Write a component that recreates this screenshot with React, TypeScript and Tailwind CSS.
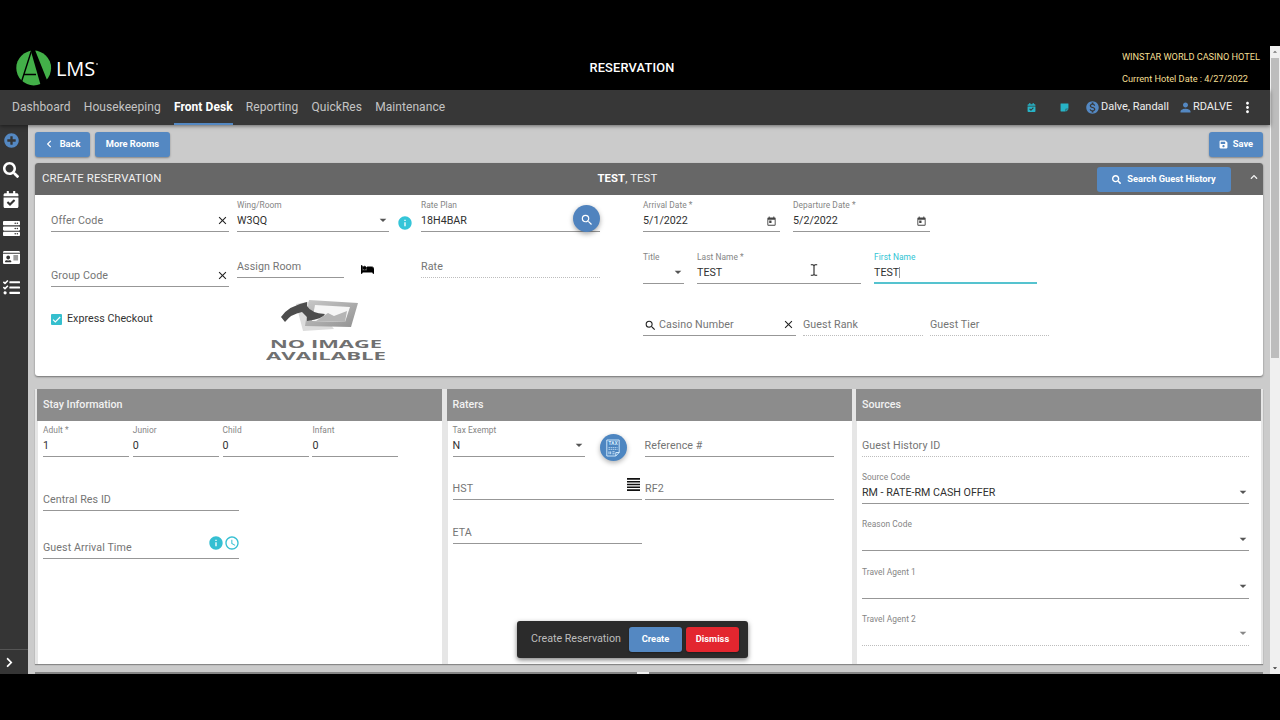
import type { ReactNode } from "react";
import {
  FaBed,
  FaCalendarCheck,
  FaChevronLeft,
  FaChevronRight,
  FaChevronUp,
  FaIdCard,
  FaPlusCircle,
  FaSave,
  FaSearch,
  FaServer,
  FaStickyNote,
  FaTasks,
} from "react-icons/fa";
import {
  MdAccessTime,
  MdArrowDropDown,
  MdClose,
  MdInfo,
  MdMonetizationOn,
  MdMoreVert,
  MdPerson,
  MdSearch,
  MdToday,
} from "react-icons/md";

type FieldProps = {
  label?: string;
  value?: string;
  placeholder?: string;
  className?: string;
  line?: "solid" | "dotted" | "active";
  prefix?: ReactNode;
  children?: ReactNode;
};

function Field({ label, value, placeholder, className = "", line = "solid", prefix, children }: FieldProps) {
  const border =
    line === "dotted"
      ? "border-b border-dotted border-[#bdbdbd]"
      : line === "active"
        ? "border-b-2 border-[#55c3cf]"
        : "border-b border-[#979797]";
  return (
    <div className={`flex h-8 shrink-0 flex-col ${border} ${className}`}>
      <div
        className={`h-[11px] shrink-0 text-[8.4px] leading-[11px] tracking-[0.05px] whitespace-nowrap ${line === "active" ? "text-[#2fc4d4]" : "text-[#858585]"}`}
      >
        {label}
      </div>
      <div className="flex h-[20px] items-center text-[10.7px] leading-[18px] whitespace-nowrap">
        {prefix}
        {value !== undefined && <span className="text-[#303030]">{value}</span>}
        {placeholder && <span className="tracking-[0.08px] text-[#757575]">{placeholder}</span>}
        {line === "active" && <span className="h-[11px] w-px bg-[#999]" />}
        <span className="-mt-[2px] ml-auto flex items-center">{children}</span>
      </div>
    </div>
  );
}

const Arrow = ({ light = false }: { light?: boolean }) => (
  <MdArrowDropDown className={`-mt-px -mr-[2px] size-4 ${light ? "text-[#888]" : "text-[#555]"}`} />
);

function Button({ className = "", children }: { className?: string; children: ReactNode }) {
  return (
    <button
      className={`flex h-[25px] items-center justify-center rounded-[3px] pb-px text-[9.3px] font-bold text-white shadow-[0_1px_2px_rgba(0,0,0,0.35)] ${className}`}
    >
      {children}
    </button>
  );
}

function Logo() {
  return (
    <svg className="size-9" viewBox="0 0 36 36">
      <circle cx="17.7" cy="18" r="17.4" fill="#43b049" />
      <path d="M14.6 0 L19 0 L32 32.5 L24.6 35 Z" fill="#000" />
      <path d="M15.2 1.5 L5.6 31.5 M8 24.5 H20" stroke="#000" strokeWidth="1.4" fill="none" />
    </svg>
  );
}

function NoImage() {
  return (
    <svg className="h-[64px] w-[122px]" viewBox="0 0 122 64">
      <defs>
        <linearGradient id="frame" x1="0" y1="0" x2="1" y2="1">
          <stop offset="0" stopColor="#c9c9c9" />
          <stop offset="1" stopColor="#929292" />
        </linearGradient>
      </defs>
      <path d="M30 5 L46 2 L68 30 L37 32 Z" fill="#dcdcdc" />
      <path d="M43 1 L92 4 L85 28 L39 27 Z" fill="url(#frame)" />
      <path d="M49 6 L84 8 L79 23 L46 22 Z" fill="#f6f6f6" />
      <path d="M50 22 L62 14 L68 17 L81 12 L79 23 Z" fill="#b5b5b5" />
      <path d="M15 18 Q22 7 41 3 L41 7 Q45 14 59 15 Q57 20 41 22 L41 18 L36 13 Q25 15 19 23 Z" fill="#4d4d4d" />
      <g fill="#707070" fontFamily="Open Sans, sans-serif" fontWeight="700" fontSize="10.5">
        <text x="4" y="48.5" textLength="112" lengthAdjust="spacingAndGlyphs">NO IMAGE</text>
        <text x="0" y="61" textLength="120" lengthAdjust="spacingAndGlyphs">AVAILABLE</text>
      </g>
    </svg>
  );
}

function TaxIcon() {
  return (
    <svg className="size-[18px]" viewBox="0 0 18 18" fill="none" stroke="#d9efff" strokeWidth="0.9">
      <path d="M2.8 1 H15.2 V13.5 L11.8 17 H2.8 Z M15.2 13.5 H11.8 V17" />
      <text x="4.4" y="6.4" fontSize="4.6" fontWeight="700" fill="#d9efff" stroke="none" textLength="9.2" fontFamily="Roboto, sans-serif">
        TAX
      </text>
      <path d="M4.5 8.6 H13.5 M4.5 10.4 H13.5" strokeDasharray="1.6 0.5" strokeWidth="0.7" />
      <path d="M5 12.4 V15.2 M6.7 12.4 V15.2 M8.4 12.8 H10.6 M8.4 14.8 H10.6" />
    </svg>
  );
}

function Bars() {
  return (
    <svg className="h-[13px] w-[13px]" viewBox="0 0 13 13" stroke="#111" strokeWidth="1.6">
      <path d="M0 0.9H13 M0 3.7H13 M0 6.5H13 M0 9.3H13 M0 12.1H13" />
    </svg>
  );
}

function Panel({ title, className = "", children }: { title: string; className?: string; children: ReactNode }) {
  return (
    <section className={`flex w-[405px] shrink-0 flex-col ${className}`}>
      <h2 className="flex h-8 items-center bg-[#8c8c8c] pt-px pl-1.5 text-[10.7px] font-medium text-[#f2f2f2]">{title}</h2>
      <div className="ml-px flex flex-1 flex-col bg-white pt-1 pl-[5px]">{children}</div>
    </section>
  );
}

const navItems = ["Dashboard", "Housekeeping", "Front Desk", "Reporting", "QuickRes", "Maintenance"];

export default function App() {
  return (
    <div className="h-[720px] w-[1280px] overflow-hidden bg-black pt-[46px] font-[Roboto,sans-serif]">
      <div className="relative flex h-[628px]">
        <div className="flex w-[1270px] flex-col">
          <header className="grid h-11 shrink-0 grid-cols-3 bg-black">
            <div className="flex items-start pt-1 pl-4">
              <Logo />
              <span className="mt-[4px] ml-1 font-['Open_Sans',sans-serif] text-[20px] leading-[30px] font-medium tracking-[-0.1px] text-white">
                LMS
              </span>
              <span className="mt-[13px] ml-px size-[2px] rounded-full bg-[#999]" />
            </div>
            <h1 className="-translate-x-[3px] pt-[14px] text-center text-[12.8px] leading-4 font-medium tracking-[0.2px] text-white">RESERVATION</h1>
            <div className="ml-auto flex w-[148px] flex-col pt-[3px] text-[9.2px] leading-[16px] whitespace-nowrap text-[#f3df93]">
              <span className="tracking-[-0.03px]">WINSTAR WORLD CASINO HOTEL</span>
              <span className="mt-[6px]">Current Hotel Date : 4/27/2022</span>
            </div>
          </header>

          <nav className="z-10 flex h-[35px] shrink-0 items-stretch gap-[13.2px] bg-[#373737] pl-3 text-[12px] tracking-[0.06px] text-[#c4c4c4] shadow-[0_1px_4px_rgba(0,0,0,0.5)]">
            {navItems.map((item) => (
              <a
                key={item}
                className={`border-b-2 pt-[8px] leading-[18px] ${item === "Front Desk" ? "border-[#5488c2] font-bold text-white" : "border-transparent"}`}
              >
                {item}
              </a>
            ))}
            <div className="ml-auto flex items-center pr-[14px] text-[11px] tracking-[-0.03px] text-[#eee]">
              <FaCalendarCheck className="mr-6 size-[9px] text-[#27b3c6]" />
              <FaStickyNote className="mr-4 size-[9px] text-[#27b3c6]" />
              <MdMonetizationOn className="size-[15px] text-[#5488c2]" />
              <span className="w-[78px] pl-px">Dalve, Randall</span>
              <MdPerson className="size-[15px] text-[#5488c2]" />
              <span className="w-[46px]">RDALVE</span>
              <MdMoreVert className="size-[17px] text-white" />
            </div>
          </nav>

          <div className="flex min-h-0 flex-1">
            <aside className="flex w-7 shrink-0 flex-col items-start bg-[#353535] text-white">
              <FaPlusCircle className="mt-2 ml-[4px] size-[15px] text-[#5488c2]" />
              <FaSearch className="mt-[14px] ml-[3px] size-4" />
              <FaCalendarCheck className="mt-[13px] ml-[3px] h-[17px] w-4" />
              <FaServer className="mt-[12px] ml-[3px] size-[17px]" />
              <FaIdCard className="mt-[12px] ml-[3px] size-[17px]" />
              <FaTasks className="mt-[13px] ml-[3px] size-[17px]" />
              <div className="mt-auto flex h-[25px] w-full items-center border-t border-[#555] pl-1">
                <FaChevronRight className="size-[11px]" />
              </div>
            </aside>

            <main className="flex min-w-0 flex-1 flex-col bg-[#cbcbcb] px-[7px]">
              <div className="flex h-[38px] shrink-0 items-start gap-[5px] pt-[7px]">
                <Button className="w-[55px] gap-[7px] bg-[#5488c2]">
                  <FaChevronLeft className="size-2" />
                  Back
                </Button>
                <Button className="w-[75px] bg-[#5488c2]">More Rooms</Button>
                <Button className="ml-auto w-[54px] gap-[5px] bg-[#5488c2]">
                  <FaSave className="size-[9px]" />
                  Save
                </Button>
              </div>

              <section className="flex h-[213px] shrink-0 flex-col rounded-[3px] bg-white shadow-[0_1px_2px_rgba(0,0,0,0.45)]">
                <div className="flex h-8 shrink-0 items-center rounded-t-[3px] bg-[#676767] pl-[7px] text-[11px] text-[#f2f2f2]">
                  <span className="w-[555.5px] text-[11.4px] tracking-[0.15px]">CREATE RESERVATION</span>
                  <span className="text-[11.3px] tracking-[0.1px]">
                    <b className="text-white">TEST</b>, TEST
                  </span>
                  <Button className="ml-auto w-[134px] gap-[6px] bg-[#5488c2] shadow-none">
                    <FaSearch className="mt-[2px] size-[9px]" />
                    Search Guest History
                  </Button>
                  <FaChevronUp className="mr-[5px] mb-1 ml-[19px] size-2" />
                </div>

                <div className="flex flex-1 pt-[5px] pl-4">
                  <div className="flex w-[186px] flex-col">
                    <Field placeholder="Offer Code" className="w-[178px]">
                      <MdClose className="size-[13px] text-[#222]" />
                    </Field>
                    <Field placeholder="Group Code" className="mt-[23px] w-[178px]">
                      <MdClose className="size-[13px] text-[#222]" />
                    </Field>
                    <label className="mt-[23px] flex h-[18px] items-center gap-[5px] text-[10.7px] tracking-[0.03px] text-[#333]">
                      <svg className="size-[11px] rounded-[1px] bg-[#35bfce]" viewBox="0 0 11 11" fill="none" stroke="#fff" strokeWidth="1.1">
                        <path d="M2 5.6 L4.3 8 L9.2 3" />
                      </svg>
                      Express Checkout
                    </label>
                  </div>

                  <div className="flex w-[161px] flex-col">
                    <Field label="Wing/Room" value="W3QQ" className="w-[152px]">
                      <Arrow />
                    </Field>
                    <div className="mt-[14px] flex items-start">
                      <Field placeholder="Assign Room" className="w-[107px]" />
                      <FaBed className="mt-[17px] ml-[17px] size-[13px] stroke-black stroke-[40px] text-black" />
                    </div>
                    <div className="mt-[21px] ml-[29px]">
                      <NoImage />
                    </div>
                  </div>

                  <MdInfo className="mt-[15px] mr-2 -ml-px size-4 shrink-0 text-[#35c5d8]" />

                  <div className="flex w-[222px] flex-col">
                    <Field label="Rate Plan" value="18H4BAR" className="w-[179px]">
                      <span className="-mt-[3px] flex size-[27px] items-center justify-center rounded-full bg-[#5083be] text-white shadow-[0_2px_5px_rgba(0,0,0,0.35)]">
                        <MdSearch className="mt-[3px] size-[14px]" />
                      </span>
                    </Field>
                    <Field placeholder="Rate" line="dotted" className="mt-[14px] w-[179px]" />
                  </div>

                  <div className="relative flex flex-col">
                    <div className="flex gap-[13px]">
                      <Field label="Arrival Date *" value="5/1/2022" className="w-[137px]">
                        <MdToday className="mt-[3px] mr-[3px] size-[11px] text-[#444]" />
                      </Field>
                      <Field label="Departure Date *" value="5/2/2022" className="w-[137px]">
                        <MdToday className="mt-[3px] mr-[3px] size-[11px] text-[#444]" />
                      </Field>
                    </div>
                    <div className="mt-5 flex gap-[13px]">
                      <Field label="Title" className="w-[41px]">
                        <Arrow />
                      </Field>
                      <Field label="Last Name *" value="TEST" className="w-[164px]" />
                      <Field label="First Name" value="TEST" line="active" className="w-[163px]" />
                    </div>
                    <div className="mt-5 flex gap-[7px]">
                      <Field
                        placeholder="Casino Number"
                        className="w-[153px]"
                        prefix={<MdSearch className="mr-[2px] ml-[1px] size-[13px] text-[#222]" />}
                      >
                        <MdClose className="mt-px mr-[1px] size-[13px] text-[#222]" />
                      </Field>
                      <Field placeholder="Guest Rank" line="dotted" className="w-[120px]" />
                      <Field placeholder="Guest Tier" line="dotted" className="w-[119px]" />
                    </div>
                    <svg className="absolute top-[64px] left-[167px] h-3 w-2" viewBox="0 0 8 12" fill="none" stroke="#222" strokeWidth="1.1">
                      <path d="M0.8 0.8 H3 L4 1.6 L5 0.8 H7.2 M4 1.6 V10.4 M0.8 11.2 H3 L4 10.4 L5 11.2 H7.2" />
                    </svg>
                  </div>
                </div>
              </section>

              <div className="mt-[13px] flex h-[275px] shrink-0 bg-[#e6e6e6] pl-[2px] shadow-[0_1px_1px_#888]">
                <Panel title="Stay Information" className="mr-[4.5px]">
                  <div className="flex gap-[3.8px]">
                    <Field label="Adult *" value="1" className="w-[86px]" />
                    <Field label="Junior" value="0" className="w-[86px]" />
                    <Field label="Child" value="0" className="w-[86px]" />
                    <Field label="Infant" value="0" className="w-[86px]" />
                  </div>
                  <Field placeholder="Central Res ID" className="mt-[22px] w-[196px]" />
                  <Field placeholder="Guest Arrival Time" className="mt-4 w-[196px]">
                    <span className="-mt-2 -mr-px flex text-[#35bfd2]">
                      <MdInfo className="size-4" />
                      <MdAccessTime className="size-4" />
                    </span>
                  </Field>
                </Panel>
                <Panel title="Raters" className="mr-[4.5px]">
                  <div className="flex h-8">
                    <Field label="Tax Exempt" value="N" className="w-[132px]">
                      <Arrow />
                    </Field>
                    <span className="mt-[9px] mr-[18px] ml-[15px] flex size-[27px] shrink-0 items-center justify-center rounded-full bg-[#4d86c1] shadow-[0_2px_5px_rgba(0,0,0,0.3)]">
                      <TaxIcon />
                    </span>
                    <Field placeholder="Reference #" className="w-[189px]" />
                  </div>
                  <div className="mt-[11px] flex gap-[3.5px]">
                    <Field placeholder="HST" className="w-[189px]">
                      <span className="-mt-[7px] mr-[2px]">
                        <Bars />
                      </span>
                    </Field>
                    <Field placeholder="RF2" className="w-[189px]" />
                  </div>
                  <Field placeholder="ETA" className="mt-3 w-[189px]" />
                </Panel>
                <Panel title="Sources">
                  <div className="flex w-[387px] flex-col gap-[15.2px]">
                    <Field placeholder="Guest History ID" line="dotted" />
                    <Field label="Source Code" value="RM - RATE-RM CASH OFFER">
                      <Arrow />
                    </Field>
                    <Field label="Reason Code">
                      <Arrow />
                    </Field>
                    <Field label="Travel Agent 1">
                      <Arrow />
                    </Field>
                    <Field label="Travel Agent 2" line="dotted">
                      <Arrow light />
                    </Field>
                  </div>
                </Panel>
              </div>

              <div className="mt-[8px] flex h-[2px] shrink-0 justify-center bg-[#858585]">
                <span className="mr-[12px] w-[12px] bg-[#eee]" />
              </div>
            </main>
          </div>
        </div>

        <div className="flex w-[10px] flex-col items-center bg-[#f0f0f0]">
          <MdArrowDropDown className="h-3 w-[10px] rotate-180 text-[#777]" />
          <div className="h-[300px] w-[8px] bg-[#bdbdbd]" />
          <MdArrowDropDown className="mt-auto h-3 w-[10px] text-[#333]" />
        </div>

        <div className="absolute top-[575px] left-[517px] z-20 flex h-[37px] w-[231px] items-center rounded-[3px] bg-[#2b2b2b] pl-[14px] text-[10.7px] text-[#bdbdbd] shadow-[0_2px_5px_rgba(0,0,0,0.5)]">
          <span className="w-[98px] whitespace-nowrap">Create Reservation</span>
          <Button className="w-[53px] bg-[#5488c2]">Create</Button>
          <Button className="ml-[4px] w-[53px] bg-[#e3262f]">Dismiss</Button>
        </div>
      </div>
    </div>
  );
}
